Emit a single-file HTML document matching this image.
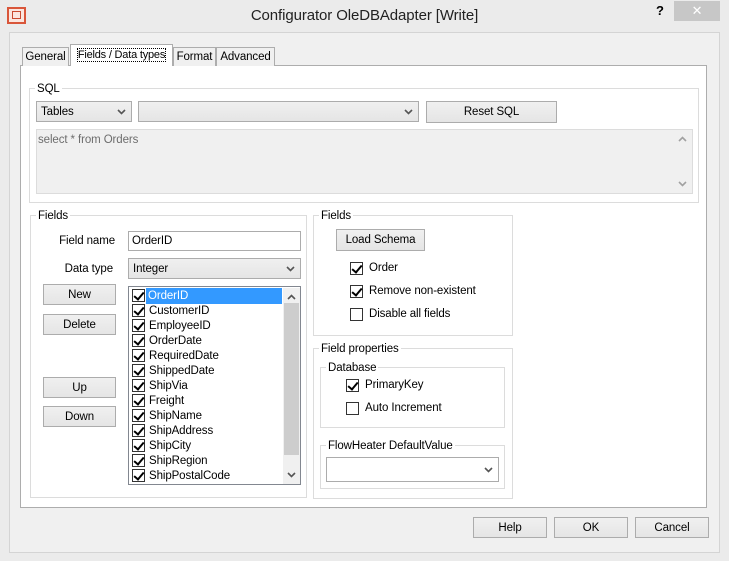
<!DOCTYPE html>
<html><head><meta charset="utf-8"><style>
*{box-sizing:border-box;margin:0;padding:0}
body{width:729px;height:561px;background:#ebebeb;font:11.5px "Liberation Sans",sans-serif;color:#000;position:relative;overflow:hidden;letter-spacing:-0.1px}
.a{position:absolute}
.client{left:9px;top:32px;width:711px;height:521px;background:#f0f0f0;border:1px solid #d4d4d4}
.btn{position:absolute;background:linear-gradient(#f0f0f0,#e5e5e5);border:1px solid #acacac;text-align:center;line-height:20px}
.grp{position:absolute;border:1px solid #dcdcdc}
.gl{position:absolute;background:#fff;padding:0 2px;line-height:14px}
.combo{position:absolute;background:linear-gradient(#f0f0f0,#e5e5e5);border:1px solid #acacac;padding-left:4px;line-height:20px}
.ar{position:absolute;right:5px;top:50%;margin-top:-3px;width:9px;height:6px}
.cb{position:absolute;width:13px;height:13px;border:1px solid #333;background:#fff}
.cb.c::after{content:"";position:absolute;left:3px;top:0px;width:4px;height:8px;border:solid #000;border-width:0 2px 2px 0;transform:rotate(40deg)}
.item{position:absolute;left:0;height:15px;width:160px}
.item .cb{left:3px;top:1px}
.item span{position:absolute;left:18px;top:0;line-height:16px;padding:0 2px}
</style></head><body>
<svg width="0" height="0" style="position:absolute"><defs><symbol id="dn" viewBox="0 0 9 6"><path d="M1 1L4.5 4.5L8 1" fill="none" stroke="#555" stroke-width="1.6"/></symbol><symbol id="up" viewBox="0 0 9 6"><path d="M1 5L4.5 1.5L8 5" fill="none" stroke="#555" stroke-width="1.6"/></symbol></defs></svg>
<div class="a" style="left:7px;top:7px;width:19px;height:17px;border:2px solid #d9563a;background:#fbe6df"></div>
<div class="a" style="left:12px;top:11px;width:9px;height:8px;border:1px solid #c84a30"></div>
<div class="a" style="left:0;top:7px;width:729px;text-align:center;font-size:15px;color:#222">Configurator OleDBAdapter [Write]</div>
<div class="a" style="left:656px;top:3px;font-weight:bold;font-size:13px">?</div>
<div class="a" style="left:674px;top:1px;width:46px;height:20px;background:#c7c7c7;color:#fff;text-align:center;line-height:19px;font-size:13px">✕</div>
<div class="a client"></div>
<div class="a" style="left:20px;top:65px;width:687px;height:443px;background:#fff;border:1px solid #adadad"></div>
<div class="a" style="left:22px;top:47px;width:47px;height:19px;border:1px solid #adadad;border-bottom:none;background:#f0f0f0;text-align:center;line-height:19px">General</div>
<div class="a" style="left:70px;top:44px;width:103px;height:22px;border:1px solid #adadad;border-bottom:none;background:#fff;text-align:center;line-height:20px;font-size:11px;letter-spacing:-0.2px;white-space:nowrap"><span style="outline:1px dotted #000">Fields / Data types</span></div>
<div class="a" style="left:173px;top:47px;width:43px;height:19px;border:1px solid #adadad;border-bottom:none;background:#f0f0f0;text-align:center;line-height:19px">Format</div>
<div class="a" style="left:216px;top:47px;width:59px;height:19px;border:1px solid #adadad;border-bottom:none;background:#f0f0f0;text-align:center;line-height:19px">Advanced</div>

<div class="grp" style="left:29px;top:88px;width:670px;height:115px"></div>
<div class="gl" style="left:35px;top:82px">SQL</div>
<div class="combo" style="left:36px;top:101px;width:96px;height:21px">Tables<svg class="ar"><use href="#dn"/></svg></div>
<div class="combo" style="left:138px;top:101px;width:281px;height:21px"><svg class="ar"><use href="#dn"/></svg></div>
<div class="btn" style="left:426px;top:101px;width:131px;height:22px">Reset SQL</div>
<div class="a" style="left:36px;top:129px;width:657px;height:65px;background:#f0f0f0;border:1px solid #dcdcdc;color:#6d6d6d;padding:4px 1px">select * from Orders</div>
<svg class="a" style="left:678px;top:136px;width:9px;height:6px"><use href="#up" opacity=".5"/></svg>
<svg class="a" style="left:678px;top:181px;width:9px;height:6px"><use href="#dn" opacity=".5"/></svg>

<div class="grp" style="left:30px;top:215px;width:277px;height:283px"></div>
<div class="gl" style="left:36px;top:209px">Fields</div>
<div class="a" style="left:50px;top:235px;width:65px;text-align:right">Field name</div>
<div class="a" style="left:128px;top:231px;width:173px;height:20px;border:1px solid #acacac;padding:3px 3px">OrderID</div>
<div class="a" style="left:50px;top:263px;width:63px;text-align:right">Data type</div>
<div class="combo" style="left:128px;top:258px;width:173px;height:21px">Integer<svg class="ar"><use href="#dn"/></svg></div>
<div class="btn" style="left:43px;top:284px;width:73px;height:21px">New</div>
<div class="btn" style="left:43px;top:314px;width:73px;height:21px">Delete</div>
<div class="btn" style="left:43px;top:377px;width:73px;height:21px">Up</div>
<div class="btn" style="left:43px;top:406px;width:73px;height:21px">Down</div>
<div class="a" style="left:128px;top:286px;width:173px;height:199px;border:1px solid #828790;background:#fff;overflow:hidden">
<div class="a" style="left:154px;top:1px;width:17px;height:196px;background:#f0f0f0"></div>
<div class="a" style="left:155px;top:16px;width:15px;height:152px;background:#cdcdcd"></div>
<svg class="a" style="left:158px;top:7px;width:9px;height:6px"><use href="#up"/></svg>
<svg class="a" style="left:158px;top:185px;width:9px;height:6px"><use href="#dn"/></svg>
<div class="item" style="top:1px"><div class="cb c"></div><span style="background:#3399ff;color:#fff;width:136px;left:17px">OrderID</span></div>
<div class="item" style="top:16px"><div class="cb c"></div><span>CustomerID</span></div>
<div class="item" style="top:31px"><div class="cb c"></div><span>EmployeeID</span></div>
<div class="item" style="top:46px"><div class="cb c"></div><span>OrderDate</span></div>
<div class="item" style="top:61px"><div class="cb c"></div><span>RequiredDate</span></div>
<div class="item" style="top:76px"><div class="cb c"></div><span>ShippedDate</span></div>
<div class="item" style="top:91px"><div class="cb c"></div><span>ShipVia</span></div>
<div class="item" style="top:106px"><div class="cb c"></div><span>Freight</span></div>
<div class="item" style="top:121px"><div class="cb c"></div><span>ShipName</span></div>
<div class="item" style="top:136px"><div class="cb c"></div><span>ShipAddress</span></div>
<div class="item" style="top:151px"><div class="cb c"></div><span>ShipCity</span></div>
<div class="item" style="top:166px"><div class="cb c"></div><span>ShipRegion</span></div>
<div class="item" style="top:181px"><div class="cb c"></div><span>ShipPostalCode</span></div>
</div>

<div class="grp" style="left:313px;top:215px;width:200px;height:121px"></div>
<div class="gl" style="left:319px;top:209px">Fields</div>
<div class="btn" style="left:336px;top:229px;width:89px;height:22px">Load Schema</div>
<div class="cb c" style="left:350px;top:262px"></div><div class="a" style="left:369px;top:262px">Order</div>
<div class="cb c" style="left:350px;top:285px"></div><div class="a" style="left:369px;top:285px">Remove non-existent</div>
<div class="cb" style="left:350px;top:308px"></div><div class="a" style="left:369px;top:308px">Disable all fields</div>

<div class="grp" style="left:313px;top:348px;width:200px;height:151px"></div>
<div class="gl" style="left:319px;top:342px">Field properties</div>
<div class="grp" style="left:320px;top:367px;width:185px;height:61px"></div>
<div class="gl" style="left:326px;top:361px">Database</div>
<div class="cb c" style="left:346px;top:379px"></div><div class="a" style="left:365px;top:379px">PrimaryKey</div>
<div class="cb" style="left:346px;top:402px"></div><div class="a" style="left:365px;top:402px">Auto Increment</div>
<div class="grp" style="left:320px;top:445px;width:185px;height:44px"></div>
<div class="gl" style="left:326px;top:439px">FlowHeater DefaultValue</div>
<div class="a" style="left:326px;top:457px;width:173px;height:25px;border:1px solid #acacac;background:#fff"><svg class="ar"><use href="#dn"/></svg></div>

<div class="btn" style="left:473px;top:517px;width:74px;height:21px">Help</div>
<div class="btn" style="left:554px;top:517px;width:74px;height:21px">OK</div>
<div class="btn" style="left:635px;top:517px;width:74px;height:21px">Cancel</div>
</body></html>
